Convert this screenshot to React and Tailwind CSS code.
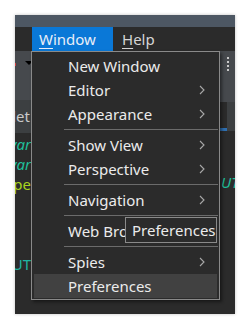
import React from 'react';

const font = { fontFamily: '"Noto Sans", "Open Sans", sans-serif' };

const Chevron = () => (
  <svg width="6" height="10" viewBox="0 0 6 10" className="shrink-0">
    <path d="M1 1 L5 5 L1 9" fill="none" stroke="#a8a8a8" strokeWidth="1.1" />
  </svg>
);

const Item = ({ label, sub, active }) => (
  <div
    className={`h-[24px] flex items-center pl-[34px] pr-[12px] mx-[2px] ${
      active ? 'bg-[#414141]' : ''
    }`}
  >
    <span className="flex-1 text-[15px] text-[#ebebeb] leading-none">{label}</span>
    {sub && <Chevron />}
  </div>
);

const Sep = () => (
  <div className="h-[7px] flex items-center pl-[32px] pr-[1px]">
    <div className="h-px w-full bg-[#6b6b6b]" />
  </div>
);

// lines of code peeking out left and right of the menu
const CodeLines = ({ lines, align }) => (
  <div className="flex flex-col pt-[1px]">
    {lines.map((l, i) => (
      <div
        key={i}
        className={`h-[20px] flex items-center overflow-hidden whitespace-nowrap text-[15px] ${
          align === 'right' ? 'justify-end' : 'justify-start'
        } ${l ? l.cls : ''}`}
      >
        {l ? l.text : ''}
      </div>
    ))}
  </div>
);

export default function App() {
  return (
    <div className="w-[251px] h-[330px] bg-white p-[15px]" style={font}>
      <div className="w-[220px] h-[299px] bg-[#2b2b2b] flex flex-col shadow-[0_0_3px_rgba(0,0,0,0.25)]">
        {/* title strip */}
        <div className="h-[12px] bg-[#4d5763]" />

        {/* menubar */}
        <div className="h-[24px] flex items-stretch bg-[#2b2b2b] text-[15px]">
          <div className="w-[17px]" />
          <div className="w-[81px] bg-[#0a78d7] flex items-center pl-[7px] text-[#e8eef8]">
            <span className="underline underline-offset-[3px]">W</span>indow
          </div>
          <div className="flex items-center pl-[9px] text-[#d6d6d6]">
            <span className="underline underline-offset-[3px]">H</span>elp
          </div>
        </div>

        {/* body */}
        <div className="relative flex-1 flex">
          {/* left strip */}
          <div className="w-[16px] flex flex-col">
            <div className="h-[49px] bg-[#46494d] relative">
              <div className="absolute left-0 top-[12px] w-[1px] h-[3px] bg-[#d04040]" />
              <div className="absolute left-[10px] top-[10px] w-0 h-0 border-l-[4px] border-r-[4px] border-t-[4px] border-l-transparent border-r-transparent border-t-black" />
            </div>
            <div className="h-[33px] bg-[#3c3f41] flex items-center justify-end overflow-hidden whitespace-nowrap text-[15px] text-[#c9c9c9] pr-[1px]">
              elet
            </div>
            <CodeLines
              align="right"
              lines={[
                { text: 'var', cls: 'italic text-[#1fbf9a]' },
                { text: 'var', cls: 'italic text-[#1fbf9a]' },
                { text: 'pe', cls: 'text-[#a8d21f]' },
                null,
                null,
                null,
                { text: 'UT', cls: 'text-[#1fb3a0]' },
              ]}
            />
          </div>

          {/* editor area under the menu */}
          <div className="flex-1" />

          {/* right strip */}
          <div className="w-[15px] flex flex-col">
            <div className="h-[51px] bg-[#46494d] flex flex-col items-center pt-[6px] pl-[2px] gap-[2px] items-start">
              {[0, 1, 2, 3].map((i) => (
                <div key={i} className="w-[2px] h-[2px] bg-[#c8c8c8] ml-[5px]" />
              ))}
            </div>
            <div className="h-[29px] flex bg-[#3c3f41]">
              <div className="w-[7px] flex flex-col">
                <div className="flex-1 bg-[#2b2b2b]" />
                <div className="h-[3px] bg-[#2f6fb0]" />
              </div>
            </div>
            <CodeLines
              lines={[null, { text: '', cls: '' }, { text: 'UT', cls: 'italic text-[#1fbf9a] pl-[1px]' }]}
            />
          </div>

          {/* dropdown menu */}
          <div className="absolute left-[16px] top-0 w-[189px] h-[249px] border border-[#8a8a8a] bg-[#2b2b2b] pt-[2px] shadow-[2px_2px_3px_rgba(0,0,0,0.45)]">
            <Item label="New Window" />
            <Item label="Editor" sub />
            <Item label="Appearance" sub />
            <Sep />
            <Item label="Show View" sub />
            <Item label="Perspective" sub />
            <Sep />
            <Item label="Navigation" sub />
            <Sep />
            <Item label="Web Browser" />
            <Sep />
            <Item label="Spies" sub />
            <Item label="Preferences" active />

            {/* tooltip */}
            <div className="absolute left-[93px] top-[165px] w-[92px] h-[26px] border border-[#8a8a8a] bg-[#2b2b2b] flex items-center pl-[6px] text-[15px] text-[#ebebeb]">
              Preferences
            </div>
          </div>
        </div>
      </div>
    </div>
  );
}
